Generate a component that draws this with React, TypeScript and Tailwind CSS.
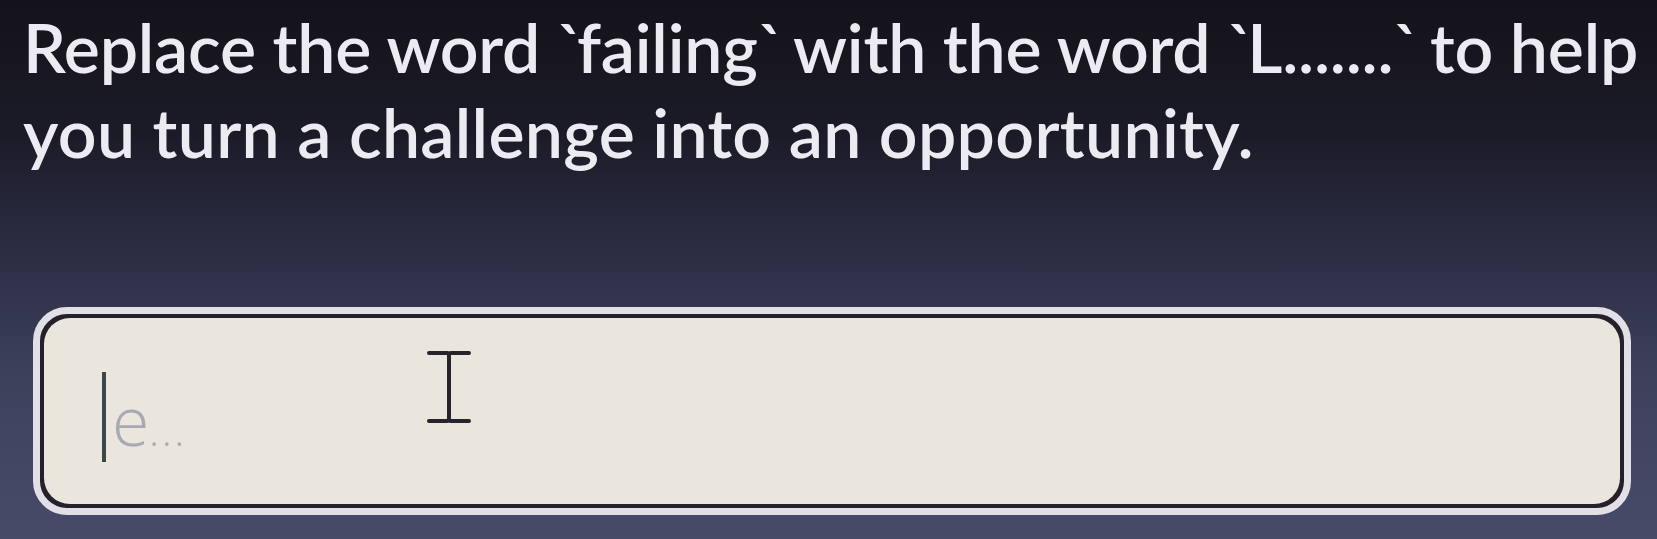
import React from "react";

function IBeam() {
  return (
    <svg width="44" height="74" viewBox="0 0 44 74" className="block">
      <path d="M2 3 H20 M24 3 H42 M22 4 V70 M2 71 H20 M24 71 H42 M20 3 Q22 3 22 6 M24 3 Q22 3 22 6 M20 71 Q22 71 22 68 M24 71 Q22 71 22 68" stroke="#26242a" strokeWidth="4" fill="none" strokeLinecap="round" />
    </svg>
  );
}

function Tick() {
  return <span className="inline-block w-[20px] text-center">`</span>;
}

export default function App() {
  return (
    <div className="w-[1657px] h-[539px] overflow-hidden bg-[linear-gradient(180deg,#14131b_0%,#1b1b28_25%,#2e3047_50%,#3e415c_70%,#474b68_100%)] font-['Lato',sans-serif]">
      <div className="pl-[23px] pt-[4px] text-[#ecebf2] text-[68px] leading-[85px] font-semibold">
        <div className="whitespace-nowrap tracking-[-0.2px]">
          Replace the word <Tick />failing<Tick /> with the word <Tick />L.......<Tick /> to help
        </div>
        <div className="whitespace-nowrap tracking-[0.3px]">you turn a challenge into an opportunity.</div>
      </div>
      <div className="mt-[133px] ml-[33px] w-[1598px] h-[208px] rounded-[34px] border-[7px] border-[#e2e0e6] bg-[#24212b] p-[4px]">
        <div className="h-full rounded-[26px] bg-[#eae5dd] flex items-start pl-[58px] pt-[32px]">
          <div className="flex items-start mt-[22px]">
            <div className="w-[4px] h-[90px] bg-[#3a4a4a]" />
            <span className="ml-[6px] mt-[14px] text-[68px] leading-none text-[#a9a9b3] font-['Open_Sans',sans-serif] font-light">e<span className="text-[40px] tracking-[3px]">...</span></span>
          </div>
          <div className="ml-[240px]">
            <IBeam />
          </div>
        </div>
      </div>
    </div>
  );
}
